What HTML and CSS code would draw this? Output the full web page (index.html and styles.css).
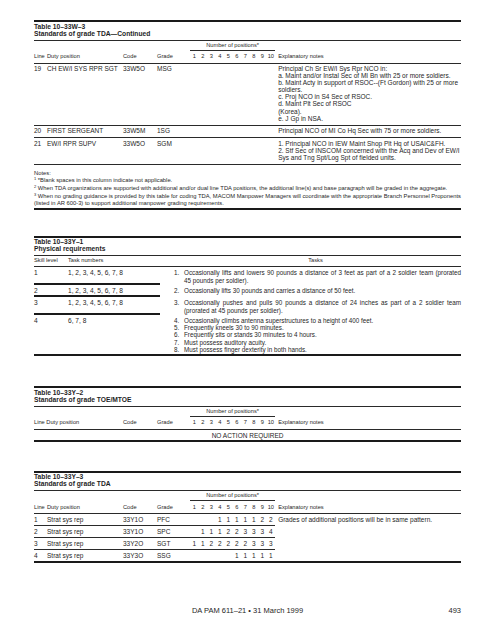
FILE: index.html
```html
<!DOCTYPE html>
<html>
<head>
<meta charset="utf-8">
<title>DA PAM 611-21 page 493</title>
<link rel="stylesheet" href="styles.css">
</head>
<body>
<div class="page">

<section class="tbl tbl-w3">
  <div class="caption"><div>Table 10–33W–3</div><div>Standards of grade TDA—Continued</div></div>
  <table class="grade w3">
    <colgroup><col class="c-line"><col class="c-duty"><col class="c-code"><col class="c-grade"><col class="c-n" span="10"><col class="c-notes"></colgroup>
    <thead>
      <tr class="np-row"><th colspan="4"></th><th colspan="10" class="np">Number of positions*</th><th></th></tr>
      <tr class="hd-row"><th>Line</th><th>Duty position</th><th>Code</th><th>Grade</th><th class="n">1</th><th class="n">2</th><th class="n">3</th><th class="n">4</th><th class="n">5</th><th class="n">6</th><th class="n">7</th><th class="n">8</th><th class="n">9</th><th class="n">10</th><th class="notes">Explanatory notes</th></tr>
    </thead>
    <tbody>
      <tr><td>19</td><td>CH EW/I SYS RPR SGT</td><td>33W5O</td><td>MSG</td><td colspan="10"></td>
        <td class="notes"><span class="l">Principal Ch Sr EW/I Sys Rpr NCO in:</span><span class="l">a. Maint and/or Instal Sec of MI Bn with 25 or more soldiers.</span><span class="l">b. Maint Acty in support of RSOC--(Ft Gordon) with 25 or more</span><span class="l">soldiers.</span><span class="l">c. Proj NCO in S4 Sec of RSOC.</span><span class="l">d. Maint Plt Sec of RSOC</span><span class="l">(Korea).</span><span class="l">e. J Gp in NSA.</span></td></tr>
      <tr><td>20</td><td>FIRST SERGEANT</td><td>33W5M</td><td>1SG</td><td colspan="10"></td>
        <td class="notes"><span class="l">Principal NCO of MI Co Hq Sec with 75 or more soldiers.</span></td></tr>
      <tr><td>21</td><td>EW/I RPR SUPV</td><td>33W5O</td><td>SGM</td><td colspan="10"></td>
        <td class="notes"><span class="l">1. Principal NCO in IEW Maint Shop Plt Hq of USAIC&amp;FH.</span><span class="l">2. Stf Sec of INSCOM concerned with the Acq and Dev of EW/I</span><span class="l">Sys and Tng Spt/Log Spt of fielded units.</span></td></tr>
    </tbody>
  </table>
  <div class="tnotes">
    <p>Notes:</p>
    <p><sup>1</sup> *Blank spaces in this column indicate not applicable.</p>
    <p><sup>2</sup> When TDA organizations are supported with additional and/or dual line TDA positions, the additional line(s) and base paragraph will be graded in the aggregate.</p>
    <p><span class="jl"><sup>3</sup> When no grading guidance is provided by this table for coding TDA, MACOM Manpower Managers will coordinate with the appropriate Branch Personnel Proponents</span><span class="l">(listed in AR 600-3) to support additional manpower grading requirements.</span></p>
  </div>
</section>

<section class="tbl tbl-y1">
  <div class="caption"><div>Table 10–33Y–1</div><div>Physical requirements</div></div>
  <table class="phys">
    <colgroup><col class="c-skill"><col class="c-tn"><col class="c-gap"><col class="c-task"></colgroup>
    <thead>
      <tr><th>Skill level</th><th>Task numbers</th><th colspan="2" class="tasks-h">Tasks</th></tr>
    </thead>
    <tbody>
      <tr><td class="sk">1</td><td class="tn">1, 2, 3, 4, 5, 6, 7, 8</td><td></td>
        <td class="tk"><div class="item"><span class="num">1.</span><span class="txt"><span class="jl">Occasionally lifts and lowers 90 pounds a distance of 3 feet as part of a 2 soldier team (prorated</span><span class="l">45 pounds per soldier).</span></span></div></td></tr>
      <tr><td class="sk">2</td><td class="tn">1, 2, 3, 4, 5, 6, 7, 8</td><td></td>
        <td class="tk"><div class="item"><span class="num">2.</span><span class="txt">Occasionally lifts 30 pounds and carries a distance of 50 feet.</span></div></td></tr>
      <tr><td class="sk">3</td><td class="tn">1, 2, 3, 4, 5, 6, 7, 8</td><td></td>
        <td class="tk"><div class="item"><span class="num">3.</span><span class="txt"><span class="jl">Occasionally pushes and pulls 90 pounds a distance of 24 inches as part of a 2 soldier team</span><span class="l">(prorated at 45 pounds per soldier).</span></span></div></td></tr>
      <tr class="last"><td class="sk">4</td><td class="tn">6, 7, 8</td><td></td>
        <td class="tk">
          <div class="item"><span class="num">4.</span><span class="txt">Occasionally climbs antenna superstructures to a height of 400 feet.</span></div>
          <div class="item"><span class="num">5.</span><span class="txt">Frequently kneels 30 to 90 minutes.</span></div>
          <div class="item"><span class="num">6.</span><span class="txt">Frequently sits or stands 30 minutes to 4 hours.</span></div>
          <div class="item"><span class="num">7.</span><span class="txt">Must possess auditory acuity.</span></div>
          <div class="item"><span class="num">8.</span><span class="txt">Must possess finger dexterity in both hands.</span></div>
        </td></tr>
    </tbody>
  </table>
</section>

<section class="tbl tbl-y2">
  <div class="caption"><div>Table 10–33Y–2</div><div>Standards of grade TOE/MTOE</div></div>
  <table class="grade y2">
    <colgroup><col class="c-line"><col class="c-duty"><col class="c-code"><col class="c-grade"><col class="c-n" span="10"><col class="c-notes"></colgroup>
    <thead>
      <tr class="np-row"><th colspan="4"></th><th colspan="10" class="np">Number of positions*</th><th></th></tr>
      <tr class="hd-row"><th colspan="2">Line Duty position</th><th>Code</th><th>Grade</th><th class="n">1</th><th class="n">2</th><th class="n">3</th><th class="n">4</th><th class="n">5</th><th class="n">6</th><th class="n">7</th><th class="n">8</th><th class="n">9</th><th class="n">10</th><th class="notes">Explanatory notes</th></tr>
    </thead>
    <tbody>
      <tr><td colspan="15" class="noaction">NO ACTION REQUIRED</td></tr>
    </tbody>
  </table>
</section>

<section class="tbl tbl-y3">
  <div class="caption"><div>Table 10–33Y–3</div><div>Standards of grade TDA</div></div>
  <table class="grade y3">
    <colgroup><col class="c-line"><col class="c-duty"><col class="c-code"><col class="c-grade"><col class="c-n" span="10"><col class="c-notes"></colgroup>
    <thead>
      <tr class="np-row"><th colspan="4"></th><th colspan="10" class="np">Number of positions*</th><th></th></tr>
      <tr class="hd-row"><th>Line</th><th>Duty position</th><th>Code</th><th>Grade</th><th class="n">1</th><th class="n">2</th><th class="n">3</th><th class="n">4</th><th class="n">5</th><th class="n">6</th><th class="n">7</th><th class="n">8</th><th class="n">9</th><th class="n">10</th><th class="notes">Explanatory notes</th></tr>
    </thead>
    <tbody>
      <tr><td>1</td><td>Strat sys rep</td><td>33Y1O</td><td>PFC</td><td class="n"></td><td class="n"></td><td class="n"></td><td class="n">1</td><td class="n">1</td><td class="n">1</td><td class="n">1</td><td class="n">1</td><td class="n">2</td><td class="n">2</td><td class="notes">Grades of additional positions will be in same pattern.</td></tr>
      <tr><td>2</td><td>Strat sys rep</td><td>33Y1O</td><td>SPC</td><td class="n"></td><td class="n">1</td><td class="n">1</td><td class="n">1</td><td class="n">2</td><td class="n">2</td><td class="n">3</td><td class="n">3</td><td class="n">3</td><td class="n">4</td><td class="notes"></td></tr>
      <tr><td>3</td><td>Strat sys rep</td><td>33Y2O</td><td>SGT</td><td class="n">1</td><td class="n">1</td><td class="n">2</td><td class="n">2</td><td class="n">2</td><td class="n">2</td><td class="n">2</td><td class="n">3</td><td class="n">3</td><td class="n">3</td><td class="notes"></td></tr>
      <tr class="last"><td>4</td><td>Strat sys rep</td><td>33Y3O</td><td>SSG</td><td class="n"></td><td class="n"></td><td class="n"></td><td class="n"></td><td class="n"></td><td class="n">1</td><td class="n">1</td><td class="n">1</td><td class="n">1</td><td class="n">1</td><td class="notes"></td></tr>
    </tbody>
  </table>
</section>

<footer class="footer"><span></span><span class="ftitle">DA PAM 611–21 • 31 March 1999</span><span class="pg">493</span></footer>

</div>
</body>
</html>
```
FILE: styles.css
```css
body {
  margin: 0;
  background: #ffffff;
}

.page {
  width: 495px;
  box-sizing: border-box;
  padding: 20px 34px 0;
  font-family: "Liberation Sans", Arial, sans-serif;
  color: #262626;
}

.tbl {
  border-top: 2px solid #1a1a1a;
}
.tbl-y1 { margin-top: 26px; }
.tbl-y2 { margin-top: 30px; }
.tbl-y3 { margin-top: 29px; }

.caption {
  font-size: 6.7px;
  font-weight: bold;
  line-height: 7px;
  padding: 0.5px 0 3px;
  border-bottom: 1px solid #2a2a2a;
  color: #1e1e1e;
}

table {
  width: 100%;
  table-layout: fixed;
  border-collapse: separate;
  border-spacing: 0;
}
th, td {
  padding: 0;
  font-weight: normal;
  text-align: left;
  vertical-align: top;
  white-space: nowrap;
}

.c-line { width: 13px; }
.c-duty { width: 76px; }
.c-code { width: 34px; }
.c-grade { width: 33px; }
.c-n { width: 8.5px; }
.c-notes { width: 186px; }

.grade th {
  font-size: 5.7px;
  line-height: 7px;
}
.np-row th { padding: 1px 0; }
.np-row th.np {
  text-align: center;
  border-bottom: 1px solid #2a2a2a;
}
.hd-row th {
  padding: 2.5px 0;
  border-bottom: 1px solid #2a2a2a;
}
.grade .n { text-align: center; }
.grade .notes { padding-left: 3px; }

.grade td {
  font-size: 6.5px;
  line-height: 7.1px;
  padding: 1.5px 0 3px;
  border-bottom: 1px solid #2a2a2a;
}
.l { display: block; }

.y3 td {
  line-height: 7px;
  padding: 2px 0;
}
.y3 td.notes { border-bottom: none; }
.y3 tr.last td { border-bottom: 2px solid #1a1a1a; }

.y2 td.noaction {
  text-align: center;
  line-height: 7px;
  padding: 2px 0 1px;
  border-bottom: 2px solid #1a1a1a;
}

.tnotes {
  font-size: 5.8px;
  line-height: 6.6px;
  padding: 4.5px 0 1.7px;
  border-bottom: 2px solid #1a1a1a;
}
.tnotes p { margin: 0 0 1.2px; }
.tnotes p:last-child { margin-bottom: 0; }
.tnotes sup {
  font-size: 4px;
  line-height: 0;
  vertical-align: 1.8px;
}

.jl {
  display: block;
  text-align: justify;
  text-align-last: justify;
}

.c-skill { width: 34px; }
.c-tn { width: 92px; }
.c-gap { width: 14px; }
.c-task { width: 287px; }

.phys th {
  font-size: 5.7px;
  line-height: 7px;
  padding: 1px 0 2px;
  border-bottom: 1px solid #2a2a2a;
}
.phys th.tasks-h {
  text-align: center;
  padding-left: 10px;
}
.phys td {
  font-size: 6.6px;
  line-height: 7.3px;
  padding: 2px 0 1px;
}
.phys td.sk, .phys td.tn { border-bottom: 2px solid #1a1a1a; }
.phys tr.last td { border-bottom: 2px solid #1a1a1a; }
.phys td.tk {
  font-size: 6.3px;
  white-space: normal;
}
.item { display: flex; }
.item .num { width: 10px; flex: none; }
.item .txt { flex: 1; min-width: 0; }

.footer {
  margin-top: 42.5px;
  display: grid;
  grid-template-columns: 1fr auto 1fr;
  font-size: 7.5px;
  line-height: 9px;
}
.footer .pg { text-align: right; }
```
